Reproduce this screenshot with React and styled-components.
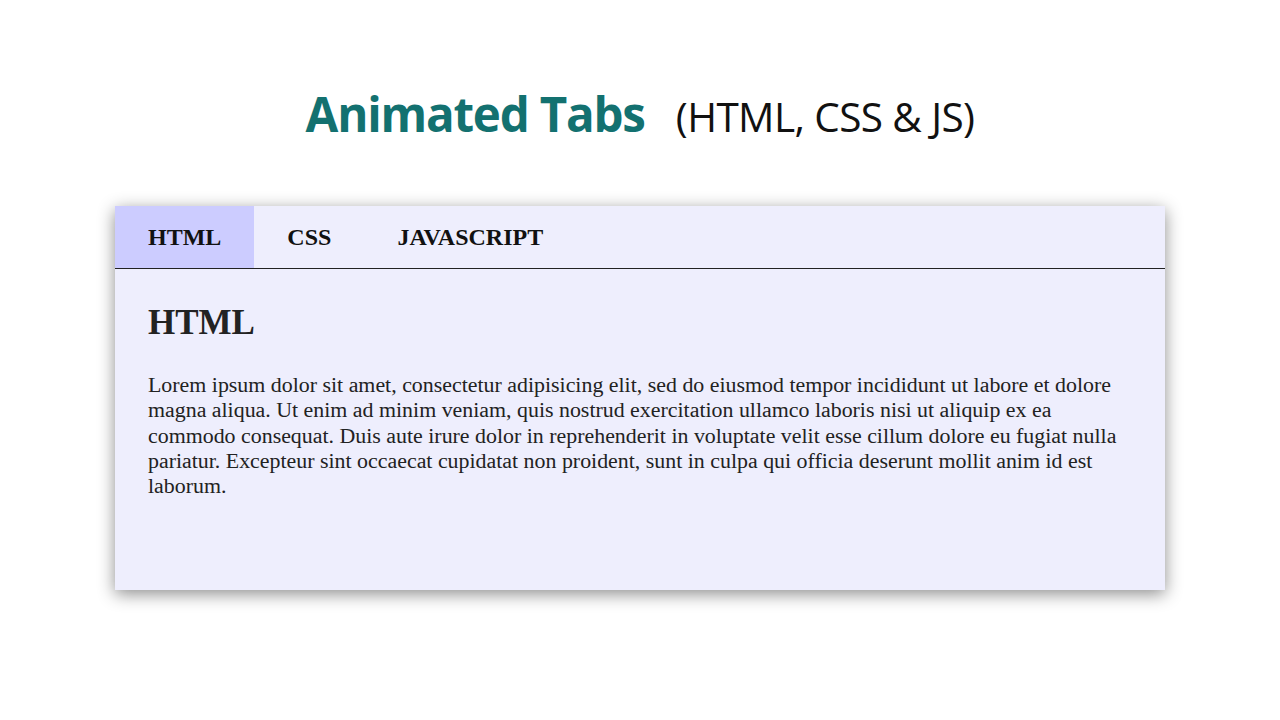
import React, { useState } from "react";
import styled, { createGlobalStyle } from "styled-components";

const GlobalStyle = createGlobalStyle`
    html, body {
        margin: 0;
        padding: 0;
        background: #ffffff;
    }
`;

const Page = styled.div`
    width: 1280px;
    height: 720px;
    display: flex;
    flex-direction: column;
    align-items: center;
    padding-top: 85px;
    box-sizing: border-box;
`;

const Title = styled.h1`
    margin: 0;
    display: flex;
    align-items: baseline;
    gap: 31px;
    font-family: "Open Sans", "Noto Sans", sans-serif;
    font-weight: 400;
    line-height: 1.2;
`;

const TitleMain = styled.span`
    color: #137170;
    font-weight: 700;
    font-size: 47.5px;
    letter-spacing: -1.2px;
`;

const TitleSub = styled.span`
    color: #111111;
    font-size: 40.5px;
    letter-spacing: -0.6px;
`;

const Card = styled.div`
    margin-top: 64px;
    width: 1050px;
    height: 384px;
    background: #eeeefd;
    box-shadow: 0 4px 16px rgba(0, 0, 0, 0.45);
    display: flex;
    flex-direction: column;
`;

const TabBar = styled.div`
    display: flex;
    height: 62px;
    border-bottom: 1px solid #222222;
`;

const Tab = styled.button`
    border: none;
    margin: 0;
    padding: 0 33px;
    background: ${(p) => (p.$active ? "#ccccff" : "transparent")};
    font-family: "Liberation Serif", "Times New Roman", serif;
    font-weight: 700;
    font-size: 24px;
    color: #111111;
    cursor: pointer;
    transition: background 0.3s;
`;

const Content = styled.div`
    padding: 0 33px;
    font-family: "Liberation Serif", "Times New Roman", serif;
    color: #222222;
`;

const Heading = styled.h2`
    margin: 33px 0 0;
    font-size: 35px;
    font-weight: 700;
    line-height: 1.2;
`;

const Text = styled.p`
    margin: 28px 0 0;
    font-size: 21.9px;
    line-height: 25.3px;
`;

const lorem =
    "Lorem ipsum dolor sit amet, consectetur adipisicing elit, sed do eiusmod tempor incididunt ut labore et dolore magna aliqua. Ut enim ad minim veniam, quis nostrud exercitation ullamco laboris nisi ut aliquip ex ea commodo consequat. Duis aute irure dolor in reprehenderit in voluptate velit esse cillum dolore eu fugiat nulla pariatur. Excepteur sint occaecat cupidatat non proident, sunt in culpa qui officia deserunt mollit anim id est laborum.";

const tabs = [
    { id: "html", label: "HTML", title: "HTML" },
    { id: "css", label: "CSS", title: "CSS" },
    { id: "js", label: "JAVASCRIPT", title: "JAVASCRIPT" },
];

const App = () => {
    const [active, setActive] = useState("html");
    const current = tabs.find((t) => t.id === active);

    return (
        <>
            <GlobalStyle />
            <Page>
                <Title>
                    <TitleMain>Animated Tabs</TitleMain>
                    <TitleSub>(HTML, CSS &amp; JS)</TitleSub>
                </Title>
                <Card>
                    <TabBar>
                        {tabs.map((t) => (
                            <Tab key={t.id} $active={t.id === active} onClick={() => setActive(t.id)}>
                                {t.label}
                            </Tab>
                        ))}
                    </TabBar>
                    <Content>
                        <Heading>{current.title}</Heading>
                        <Text>{lorem}</Text>
                    </Content>
                </Card>
            </Page>
        </>
    );
};

export default App;
